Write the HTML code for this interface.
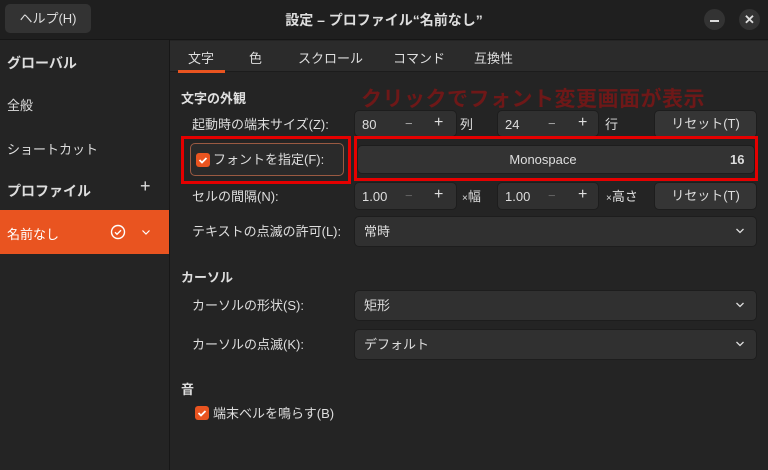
<!DOCTYPE html>
<html><head><meta charset="utf-8"><style>
*{margin:0;padding:0;box-sizing:border-box}
body{width:768px;height:470px;background:#242424;color:#dedede;font-family:"Liberation Sans","Noto Sans CJK JP",sans-serif;font-size:13px;position:relative;overflow:hidden}
.a{position:absolute;white-space:nowrap}
.b{font-weight:bold}
.box{position:absolute;background:#303030;border:1px solid #1d1d1d;border-radius:5px}
.lbl{position:absolute;white-space:nowrap;line-height:16px}
.cb{position:absolute;width:14px;height:14px;background:#e95420;border-radius:3px}
</style></head><body>
<div class="a" style="left:0;top:0;width:768px;height:40px;background:#1f1f1f;border-bottom:1px solid #161616"></div>
<div class="a" style="left:5px;top:4px;width:86px;height:29px;background:#333;border-radius:5px;text-align:center;line-height:29px;font-size:13px">ヘルプ(H)</div>
<div class="a b" style="left:0;width:768px;top:10px;text-align:center;font-size:14px">設定 – プロファイル“名前なし”</div>
<div class="a" style="left:704px;top:9px;width:21px;height:21px;border-radius:50%;background:#333"></div>
<div class="a" style="left:710px;top:20px;width:9px;height:2px;background:#ddd"></div>
<div class="a" style="left:739px;top:9px;width:21px;height:21px;border-radius:50%;background:#333;text-align:center;line-height:21px;font-size:13px;font-weight:bold">✕</div>

<!-- sidebar -->
<div class="a" style="left:169px;top:40px;width:1px;height:430px;background:#171717"></div>
<div class="a b" style="left:7px;top:53px;font-size:14px">グローバル</div>
<div class="a" style="left:7px;top:95px">全般</div>
<div class="a" style="left:7px;top:139px">ショートカット</div>
<div class="a b" style="left:7px;top:181px;font-size:14px">プロファイル</div>
<div class="a" style="left:140px;top:176px;font-size:18px;font-weight:300">+</div>
<div class="a" style="left:0;top:210px;width:169px;height:44px;background:#e95420"></div>
<div class="a" style="left:7px;top:224px;color:#fff">名前なし</div>
<svg class="a" style="left:110px;top:224px" width="16" height="16" viewBox="0 0 16 16"><circle cx="8" cy="8" r="6.5" fill="none" stroke="#fff" stroke-width="1.4"/><path d="M5 8.2l2 2 4-4" fill="none" stroke="#fff" stroke-width="1.4"/></svg>
<svg class="a" style="left:141px;top:228px" width="10" height="8" viewBox="0 0 10 8"><path d="M1.5 2.5l3.5 3.5 3.5-3.5" fill="none" stroke="#fff" stroke-width="1.2"/></svg>

<!-- tabs -->
<div class="a" style="left:170px;top:41px;width:598px;height:31px;background:#2b2b2b;border-bottom:1px solid #1c1c1c"></div>
<div class="a" style="left:188px;top:48px">文字</div>
<div class="a" style="left:178px;top:70px;width:47px;height:3px;background:#e95420"></div>
<div class="a" style="left:249px;top:48px">色</div>
<div class="a" style="left:298px;top:48px">スクロール</div>
<div class="a" style="left:393px;top:48px">コマンド</div>
<div class="a" style="left:474px;top:48px">互換性</div>

<div class="a b" style="left:181px;top:88px">文字の外観</div>
<div class="a b" style="left:361px;top:83px;font-size:21px;color:#6e1818;letter-spacing:0.5px">クリックでフォント変更画面が表示</div>

<!-- row1 -->
<div class="lbl" style="left:192px;top:117px">起動時の端末サイズ(Z):</div>
<div class="box" style="left:354px;top:110px;width:103px;height:27px"></div>
<div class="lbl" style="left:362px;top:117px">80</div>
<div class="lbl" style="left:405px;top:116px;color:#aaa">−</div>
<div class="lbl" style="left:434px;top:115px;font-size:16px">+</div>
<div class="lbl" style="left:460px;top:117px">列</div>
<div class="box" style="left:497px;top:110px;width:102px;height:27px"></div>
<div class="lbl" style="left:505px;top:117px">24</div>
<div class="lbl" style="left:548px;top:116px;color:#aaa">−</div>
<div class="lbl" style="left:578px;top:115px;font-size:16px">+</div>
<div class="lbl" style="left:605px;top:117px">行</div>
<div class="box" style="left:654px;top:110px;width:103px;height:28px;background:#353535;text-align:center;line-height:26px">リセット(T)</div>

<!-- row2 -->
<div class="a" style="left:181px;top:136px;width:170px;height:48px;border:3px solid #e50000"></div>
<div class="a" style="left:190px;top:143px;width:154px;height:33px;border:1px solid #9a5a42;border-radius:5px;background:#2a2a2a"></div>
<div class="cb" style="left:196px;top:153px"></div>
<svg class="a" style="left:196px;top:153px" width="14" height="14"><path d="M3.5 7l2.5 2.5 4.5-4.5" fill="none" stroke="#fff" stroke-width="1.8"/></svg>
<div class="lbl" style="left:213px;top:152px">フォントを指定(F):</div>
<div class="a" style="left:354px;top:136px;width:404px;height:45px;border:3px solid #e50000"></div>
<div class="box" style="left:357px;top:145px;width:398px;height:29px;background:#333"></div>
<div class="lbl" style="left:0;width:1086px;text-align:center;top:152px">Monospace</div>
<div class="lbl b" style="left:730px;top:152px">16</div>

<!-- row3 -->
<div class="lbl" style="left:192px;top:189px">セルの間隔(N):</div>
<div class="box" style="left:354px;top:182px;width:103px;height:28px"></div>
<div class="lbl" style="left:362px;top:189px">1.00</div>
<div class="lbl" style="left:405px;top:188px;color:#666">−</div>
<div class="lbl" style="left:434px;top:187px;font-size:16px">+</div>
<div class="lbl" style="left:462px;top:189px"><span style="font-size:10px">×</span>幅</div>
<div class="box" style="left:497px;top:182px;width:102px;height:28px"></div>
<div class="lbl" style="left:505px;top:189px">1.00</div>
<div class="lbl" style="left:548px;top:188px;color:#666">−</div>
<div class="lbl" style="left:578px;top:187px;font-size:16px">+</div>
<div class="lbl" style="left:606px;top:189px"><span style="font-size:10px">×</span>高さ</div>
<div class="box" style="left:654px;top:182px;width:103px;height:28px;background:#353535;text-align:center;line-height:26px">リセット(T)</div>

<!-- dropdowns -->
<div class="lbl" style="left:192px;top:224px">テキストの点滅の許可(L):</div>
<div class="box" style="left:354px;top:216px;width:403px;height:31px"></div>
<div class="lbl" style="left:364px;top:224px">常時</div>
<svg class="a" style="left:735px;top:227px" width="10" height="8"><path d="M1.5 2l3.5 3.5 3.5-3.5" fill="none" stroke="#ddd" stroke-width="1.3"/></svg>

<div class="a b" style="left:181px;top:267px">カーソル</div>
<div class="lbl" style="left:192px;top:298px">カーソルの形状(S):</div>
<div class="box" style="left:354px;top:290px;width:403px;height:31px"></div>
<div class="lbl" style="left:364px;top:298px">矩形</div>
<svg class="a" style="left:735px;top:301px" width="10" height="8"><path d="M1.5 2l3.5 3.5 3.5-3.5" fill="none" stroke="#ddd" stroke-width="1.3"/></svg>

<div class="lbl" style="left:192px;top:337px">カーソルの点滅(K):</div>
<div class="box" style="left:354px;top:329px;width:403px;height:31px"></div>
<div class="lbl" style="left:364px;top:337px">デフォルト</div>
<svg class="a" style="left:735px;top:340px" width="10" height="8"><path d="M1.5 2l3.5 3.5 3.5-3.5" fill="none" stroke="#ddd" stroke-width="1.3"/></svg>

<div class="a b" style="left:181px;top:379px">音</div>
<div class="cb" style="left:195px;top:406px"></div>
<svg class="a" style="left:195px;top:406px" width="14" height="14"><path d="M3.5 7l2.5 2.5 4.5-4.5" fill="none" stroke="#fff" stroke-width="1.8"/></svg>
<div class="lbl" style="left:213px;top:406px">端末ベルを鳴らす(B)</div>
</body></html>
